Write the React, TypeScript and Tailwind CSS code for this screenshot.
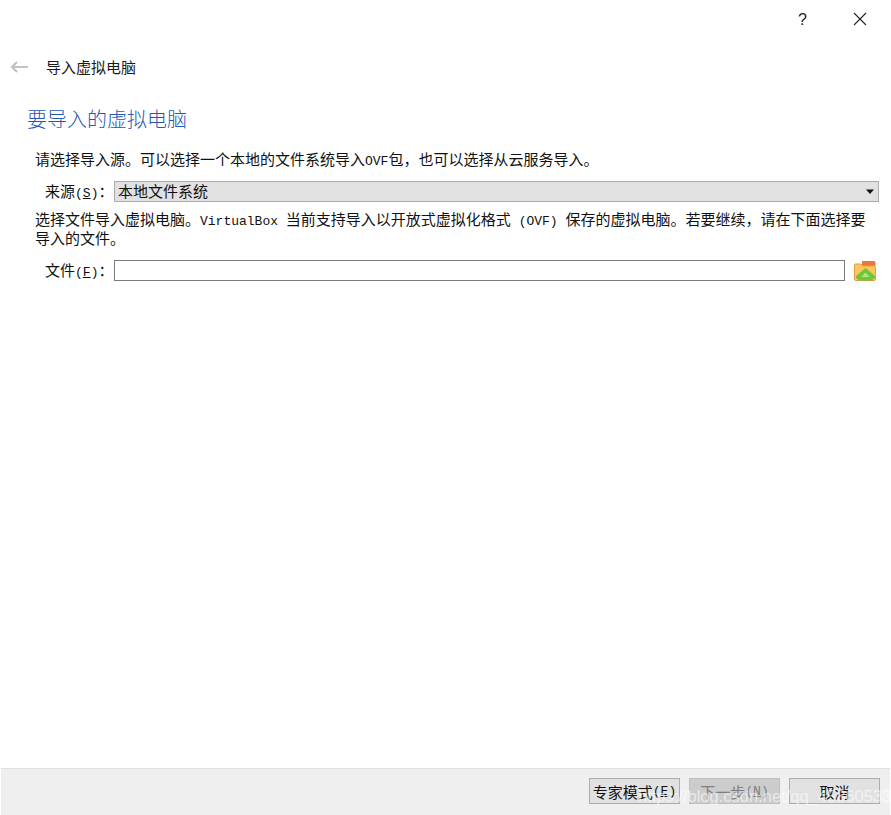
export default function App() {
  const latin = "font-['Liberation_Mono'] text-[13px]";
  return (
    <div className="relative flex h-[815px] w-[891px] flex-col overflow-hidden bg-white font-['Noto_Sans_CJK_SC',sans-serif] text-[15px] leading-[15px] text-[#111]">
      {/* title bar */}
      <div className="flex h-[38px] items-center justify-end pr-[23px]">
        <span className="mr-[45px] font-['Liberation_Sans'] text-[16px] text-[#222]">?</span>
        <svg width="16" height="16" viewBox="0 0 16 16" fill="none" stroke="#222" strokeWidth="1.1">
          <path d="M2 2 L14 14 M14 2 L2 14" />
        </svg>
      </div>

      {/* wizard header */}
      <div className="flex h-[58px] items-center pl-[10px]">
        <svg width="18" height="12" viewBox="0 0 18 12" fill="none" stroke="#c2c2c2" strokeWidth="2.2">
          <path d="M18 6 H2 M7 1 L2 6 L7 11" />
        </svg>
        <span className="ml-[18px] mt-[-2px] text-[15px] text-[#1a1a1a]">导入虚拟电脑</span>
      </div>

      <h1 className="mb-[20px] mt-[11px] pl-[27px] text-[20px] leading-[24px] font-light text-[#2458b4]">要导入的虚拟电脑</h1>

      <div className="flex flex-1 flex-col pl-[35px] pr-[12px]">
        <p className="mb-[12px]">
          请选择导入源。可以选择一个本地的文件系统导入<span className={latin}>OVF</span>包，也可以选择从云服务导入。
        </p>

        <div className="flex items-center">
          <label className="ml-[10px] w-[69px]">
            来源<span className={latin}>(<span className="underline">S</span>)</span>：
          </label>
          <div className="flex h-[21px] w-[765px] items-center justify-between border border-[#adadad] bg-[#e1e1e1] pl-[3px] pr-[4px]">
            <span className="mt-[-2px]">本地文件系统</span>
            <svg width="10" height="6" viewBox="0 0 10 6" className="mr-[-1px]">
              <path d="M1 0.5 H9 L5 5 Z" fill="#111" />
            </svg>
          </div>
        </div>

        <p className="mt-[9px] max-w-[836px] leading-[16px]">
          选择文件导入虚拟电脑。<span className={latin}>VirtualBox </span>当前支持导入以开放式虚拟化格式<span className={latin}> (OVF) </span>保存的虚拟电脑。若要继续，请在下面选择要导入的文件。
        </p>

        <div className="mt-[14px] flex items-center">
          <label className="ml-[10px] w-[69px]">
            文件<span className={latin}>(<span className="underline">F</span>)</span>：
          </label>
          <div className="h-[21px] w-[731px] border border-[#7a7a7a] bg-white" />
          <svg width="22" height="21" viewBox="0 0 22 21" className="ml-[9px]">
            <path d="M8 1 H20 Q21.5 1 21.5 3 V6 H8 Z" fill="#e8793a" />
            <path d="M1 4 H7 L9 6 H20 Q21.5 6 21.5 8 V19 Q21.5 20.5 20 20.5 H2 Q0.5 20.5 0.5 19 V5 Q0.5 4 1 4 Z" fill="#fbc75c" stroke="#e59b45" strokeWidth="1" />
            <path d="M11.5 8 L21 16 V18 L17.5 20.5 H5.5 L2 18 V16 Z" fill="#6fc63a" />
            <path d="M11.5 12.5 L15.5 17 H7.5 Z" fill="#b6e67a" />
          </svg>
        </div>
      </div>

      {/* footer */}
      <div className="mx-[1px] flex h-[47px] items-start justify-end gap-[9px] border-t border-[#dfdfdf] bg-[#efefef] pr-[10px] pt-[9px]">
        <button className="flex h-[26px] w-[91px] items-center justify-center border border-[#adadad] bg-[#e1e1e1] text-[#111]">
          专家模式<span className={latin}>(<span className="underline">E</span>)</span>
        </button>
        <button className="flex h-[26px] w-[91px] items-center justify-center border border-[#bfbfbf] bg-[#cccccc] text-[#7f7f7f]">
          下一步<span className={latin}>(<span className="underline">N</span>)</span>
        </button>
        <button className="flex h-[26px] w-[91px] items-center justify-center border border-[#adadad] bg-[#e1e1e1] text-[#111]">
          取消
        </button>
      </div>

      {/* watermark */}
      <span className="absolute left-[638px] top-[785px] font-['Liberation_Sans'] text-[16.5px] leading-[22px] whitespace-nowrap text-white/60">
        https://blog.csdn.net/qq_45860533
      </span>
    </div>
  );
}
